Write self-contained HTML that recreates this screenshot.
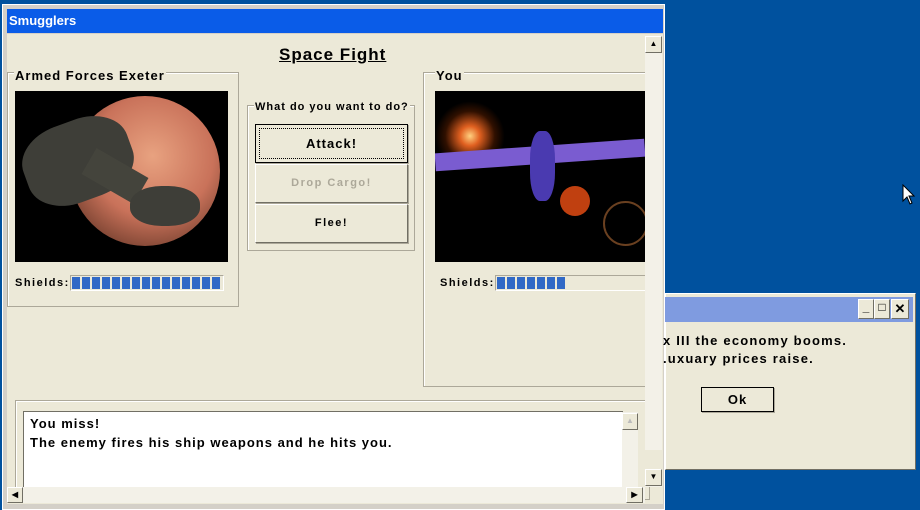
<!DOCTYPE html>
<html><head><style>
*{margin:0;padding:0;box-sizing:border-box}
body{width:920px;height:510px;background:#00519e;position:relative;overflow:hidden;font-family:"Liberation Sans",Arial,sans-serif;font-weight:bold;color:#000}
.a{position:absolute}
.grp{position:absolute;border:1px solid #aca899;box-shadow:inset 1px 1px 0 #fff}
.lbl{position:absolute;background:#ece9d8;font-size:13px;padding:0 1px;line-height:14px;letter-spacing:1px}
.btn{position:absolute;background:#ece9d8;border:1px solid #fff;border-right-color:#716f64;border-bottom-color:#716f64;box-shadow:1px 1px 0 #aca899;font-size:11px;text-align:center;letter-spacing:1.5px}
.bar{position:absolute;border:1px solid #aca899;border-right-color:#fff;border-bottom-color:#fff;background:#ece9d8;height:16px;padding:1px;display:flex;flex-wrap:nowrap;overflow:hidden}
.bar i{flex:none;display:block;width:8px;height:12px;background:#3169c6;margin-right:2px}
.sb{position:absolute;background:#f3f1e8}
.ar{position:absolute;background:#ece9d8;border:1px solid #fff;border-right-color:#716f64;border-bottom-color:#716f64;font-size:8px;text-align:center;line-height:14px}
</style></head><body>
<div class="a" style="left:2px;top:4px;width:663px;height:506px;background:#d4d0c8;border:1px solid #fff"></div>
<div class="a" style="left:7px;top:9px;width:656px;height:24px;background:#0a5ce8;color:#fff;font-size:13px;line-height:24px;padding-left:2px">Smugglers</div>
<div class="a" style="left:7px;top:34px;width:656px;height:470px;background:#ece9d8"></div>
<div class="a" style="left:279px;top:45px;font-size:17px;text-decoration:underline;letter-spacing:1px">Space Fight</div>

<div class="grp" style="left:7px;top:72px;width:232px;height:235px"></div>
<div class="lbl" style="left:14px;top:69px">Armed Forces Exeter</div>
<div class="a" style="left:15px;top:91px;width:213px;height:171px;background:#000;overflow:hidden">
 <div class="a" style="left:55px;top:5px;width:150px;height:150px;border-radius:50%;background:radial-gradient(circle at 55% 40%,#e8a280,#c9725a 50%,#6b3a2a 85%)"></div>
 <div class="a" style="left:8px;top:30px;width:110px;height:80px;border-radius:40%;background:#3e3e38;transform:rotate(-20deg)"></div>
 <div class="a" style="left:70px;top:70px;width:60px;height:30px;background:#44443c;transform:rotate(30deg)"></div>
 <div class="a" style="left:115px;top:95px;width:70px;height:40px;border-radius:45%;background:#3e3e38"></div>
</div>
<div class="a" style="left:15px;top:277px;font-size:11px;letter-spacing:1.5px">Shields:</div>
<div class="bar" style="left:70px;top:275px;width:154px"><i></i><i></i><i></i><i></i><i></i><i></i><i></i><i></i><i></i><i></i><i></i><i></i><i></i><i></i><i></i></div>

<div class="grp" style="left:247px;top:105px;width:168px;height:146px"></div>
<div class="lbl" style="left:254px;top:100px;font-size:11px;letter-spacing:1px">What do you want to do?</div>
<div class="btn" style="left:255px;top:124px;width:153px;height:39px;border:1px solid #000;font-size:13px;line-height:37px;letter-spacing:1px"><div style="position:absolute;inset:3px;border:1px dotted #000"></div>Attack!</div>
<div class="btn" style="left:255px;top:164px;width:153px;height:39px;line-height:37px;color:#aca899">Drop Cargo!</div>
<div class="btn" style="left:255px;top:204px;width:153px;height:39px;line-height:37px">Flee!</div>

<div class="grp" style="left:423px;top:72px;width:230px;height:315px"></div>
<div class="lbl" style="left:435px;top:69px">You</div>
<div class="a" style="left:435px;top:91px;width:210px;height:171px;background:#000;overflow:hidden">
 <div class="a" style="left:0;top:10px;width:70px;height:70px;border-radius:50%;background:radial-gradient(circle,#ffd080,#e06020 20%,rgba(120,40,0,.4) 50%,transparent 70%)"></div>
 <div class="a" style="left:0;top:55px;width:210px;height:18px;background:#7a5cd0;transform:rotate(-4deg)"></div>
 <div class="a" style="left:95px;top:40px;width:25px;height:70px;border-radius:40%;background:#4a3ab0"></div>
 <div class="a" style="left:125px;top:95px;width:30px;height:30px;border-radius:50%;background:#c04010"></div>
 <div class="a" style="left:168px;top:110px;width:45px;height:45px;border-radius:50%;border:2px solid #6a4020"></div>
</div>
<div class="a" style="left:440px;top:277px;font-size:11px;letter-spacing:1.5px">Shields:</div>
<div class="bar" style="left:495px;top:275px;width:155px"><i></i><i></i><i></i><i></i><i></i><i></i><i></i></div>

<div class="grp" style="left:15px;top:400px;width:635px;height:100px"></div>
<div class="a" style="left:23px;top:411px;width:600px;height:78px;background:#fff;border:1px solid #716f64;border-right:none;font-size:13px;line-height:19px;padding:2px 6px;letter-spacing:1px">You miss!<br>The enemy fires his ship weapons and he hits you.</div>
<div class="sb" style="left:622px;top:412px;width:16px;height:75px"></div>
<div class="ar" style="left:622px;top:413px;width:16px;height:17px;color:#bbb">▲</div>
<div class="sb" style="left:7px;top:487px;width:638px;height:16px"></div>
<div class="ar" style="left:7px;top:487px;width:16px;height:16px">◀</div>
<div class="ar" style="left:626px;top:487px;width:17px;height:16px">▶</div>
<div class="sb" style="left:645px;top:36px;width:17px;height:451px"></div>
<div class="ar" style="left:645px;top:36px;width:17px;height:17px">▲</div>
<div class="a" style="left:645px;top:450px;width:17px;height:19px;background:#ece9d8"></div>
<div class="ar" style="left:645px;top:469px;width:17px;height:17px">▼</div>

<div class="a" style="left:665px;top:293px;width:251px;height:177px;background:#ece9d8;border:1px solid #fff;border-right-color:#716f64;border-bottom-color:#716f64"></div>
<div class="a" style="left:665px;top:297px;width:248px;height:25px;background:#7f9be0"></div>
<div class="ar" style="left:858px;top:299px;width:16px;height:20px;font-size:12px">_</div>
<div class="ar" style="left:874px;top:299px;width:16px;height:20px;font-size:12px">□</div>
<div class="ar" style="left:891px;top:299px;width:18px;height:20px;font-size:13px;line-height:18px">✕</div>
<div class="a" style="left:663px;top:332px;font-size:13px;line-height:18px;letter-spacing:1.2px">x III the economy booms.<br>.uxuary prices raise.</div>
<div class="btn" style="left:701px;top:387px;width:73px;height:25px;border:1px solid #000;font-size:13px;line-height:23px;letter-spacing:1px">Ok</div>
<svg class="a" style="left:902px;top:184px" width="14" height="22"><path d="M1 1 L1 17 L5 13 L8 20 L10 19 L7 12 L12 12 Z" fill="#fff" stroke="#000"/></svg>
</body></html>
